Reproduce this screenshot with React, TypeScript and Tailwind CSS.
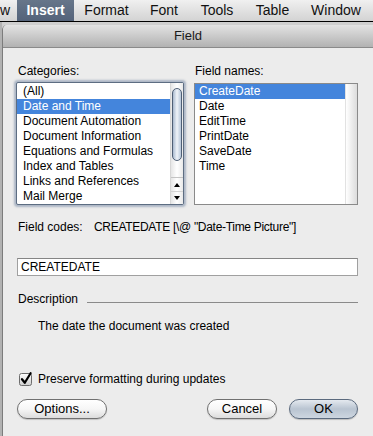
export default function App() {
  const cats = [
    "(All)",
    "Date and Time",
    "Document Automation",
    "Document Information",
    "Equations and Formulas",
    "Index and Tables",
    "Links and References",
    "Mail Merge",
  ];
  const names = ["CreateDate", "Date", "EditTime", "PrintDate", "SaveDate", "Time"];
  return (
    <div className="w-[373px] h-[436px] overflow-hidden bg-[#cfcfcf] font-['Liberation_Sans',Arial,sans-serif] text-black flex flex-col">
      {/* menu bar */}
      <div className="h-[22px] shrink-0 flex border-b border-black bg-linear-to-b from-[#f0f0f0] to-[#d3d3d3] text-[14px] leading-[21px] text-[#111]">
        <div className="w-[17px] shrink-0 pl-[-1px]">
          <span className="whitespace-nowrap">w</span>
        </div>
        <div className="w-[57px] shrink-0 text-center bg-linear-to-b from-[#67768a] to-[#54637a] text-white font-bold">Insert</div>
        <div className="w-[65px] shrink-0 text-center">Format</div>
        <div className="w-[50px] shrink-0 text-center">Font</div>
        <div className="w-[56px] shrink-0 text-center">Tools</div>
        <div className="w-[55px] shrink-0 text-center">Table</div>
        <div className="w-[72px] shrink-0 text-center">Window</div>
      </div>

      <div className="flex flex-1 min-h-0">
        <div className="w-[2px] shrink-0 bg-[#b2b2b2]" />
        <div className="flex-1 mt-[3px] flex flex-col border-l border-[#7c7c7c] rounded-tl-[5px] overflow-hidden">
          {/* title bar */}
          <div className="h-[23px] shrink-0 border-b border-[#8a8a8a] bg-linear-to-b from-[#e3e3e3] to-[#b2b2b2] text-center text-[13px] leading-[22px] text-[#1a1a1a]">
            Field
          </div>

          {/* body */}
          <div className="flex-1 bg-[#ececec] pl-[13px] pr-[15px] text-[12px] leading-[15px]">
            <div className="mt-[16px] flex gap-[10px]">
              {/* categories */}
              <div className="w-[168px] shrink-0">
                <div className="h-[15px] pl-[2px]">Categories:</div>
                <div className="mt-[3px] h-[123px] flex bg-white border border-[#5d6d82] rounded-[2px] shadow-[0_0_2px_2px_rgba(110,130,160,0.5)]">
                  <div className="flex-1 pt-px">
                    {cats.map((c, i) => (
                      <div
                        key={c}
                        className={
                          i === 1
                            ? "h-[15px] pl-[6px] whitespace-nowrap bg-[#4485dc] text-white"
                            : "h-[15px] pl-[6px] whitespace-nowrap"
                        }
                      >
                        {c}
                      </div>
                    ))}
                  </div>
                  <div className="w-[13px] shrink-0 flex flex-col border-l border-[#d6d6d6] bg-linear-to-r from-[#e6e6e6] via-white to-[#e9e9e9]">
                    <div className="flex-1 pt-[5px]">
                      <div className="ml-px w-[10px] h-[73px] rounded-full border border-[#4f5f75] bg-linear-to-r from-[#a9b9ce] via-[#f0f4f9] to-[#b6c6d9]" />
                    </div>
                    <div className="h-[14px] border-t border-[#c4c4c4] flex items-center justify-center">
                      <div className="w-0 h-0 border-x-[3px] border-x-transparent border-b-[4px] border-b-black" />
                    </div>
                    <div className="h-[13px] border-t border-[#d4d4d4] flex items-center justify-center">
                      <div className="w-0 h-0 border-x-[3px] border-x-transparent border-t-[4px] border-t-black" />
                    </div>
                  </div>
                </div>
              </div>

              {/* field names */}
              <div className="w-[164px] shrink-0">
                <div className="h-[15px] pl-[1px]">Field names:</div>
                <div className="mt-[4px] h-[122px] flex bg-white border border-[#8a8a8a]">
                  <div className="flex-1">
                    {names.map((n, i) => (
                      <div
                        key={n}
                        className={
                          i === 0
                            ? "h-[15px] pl-[4px] bg-[#4485dc] text-white"
                            : "h-[15px] pl-[4px]"
                        }
                      >
                        {n}
                      </div>
                    ))}
                  </div>
                  <div className="w-[12px] shrink-0 border-l border-[#e2e2e2] bg-linear-to-r from-white to-[#dcdcdc]" />
                </div>
              </div>
            </div>

            {/* field codes */}
            <div className="mt-[15px] h-[15px] flex pl-[2px] whitespace-nowrap">
              <div className="w-[76px] shrink-0">Field codes:</div>
              <div className="tracking-[-0.3px]">{'CREATEDATE [\\@ "Date-Time Picture"]'}</div>
            </div>

            {/* input */}
            <div className="mt-[23px] ml-px w-[341px] h-[18px] bg-white border border-[#a0a0a0] border-t-[#858585] pl-[3px] leading-[16px]">
              CREATEDATE
            </div>

            {/* description */}
            <div className="mt-[16px] h-[15px] flex items-start">
              <div className="pl-[2px] shrink-0">Description</div>
              <div className="flex-1 ml-[9px] mt-[10px] h-px bg-[#8a8a8a]" />
            </div>
            <div className="mt-[12px] pl-[22px] h-[15px]">The date the document was created</div>

            {/* checkbox */}
            <div className="mt-[38px] h-[15px] flex items-center pl-[3px]">
              <svg width="15" height="15" viewBox="0 0 15 15" className="shrink-0">
                <defs>
                  <linearGradient id="cbg" x1="0" y1="0" x2="0" y2="1">
                    <stop offset="0" stopColor="#ffffff" />
                    <stop offset="1" stopColor="#cfcfcf" />
                  </linearGradient>
                </defs>
                <rect x="0.5" y="1.5" width="12" height="12" rx="2" fill="url(#cbg)" stroke="#6d6d6d" />
                <path d="M3 7.2 L5.8 10.8 L11.6 1.2" fill="none" stroke="#000" strokeWidth="2.2" strokeLinecap="round" strokeLinejoin="round" />
              </svg>
              <span className="ml-[4px] whitespace-nowrap">Preserve formatting during updates</span>
            </div>

            {/* buttons */}
            <div className="mt-[12px] flex text-[13px] leading-[18px]">
              <div className="ml-px w-[90px] h-[20px] rounded-full border border-[#707070] bg-linear-to-b from-white via-[#f6f6f6] to-[#dcdcdc] shadow-[0_1px_1px_rgba(0,0,0,0.18)] text-center">
                Options...
              </div>
              <div className="ml-auto w-[70px] h-[20px] rounded-full border border-[#707070] bg-linear-to-b from-white via-[#f6f6f6] to-[#dcdcdc] shadow-[0_1px_1px_rgba(0,0,0,0.18)] text-center">
                Cancel
              </div>
              <div className="ml-[12px] w-[69px] h-[20px] rounded-full border border-[#5b6a7e] bg-linear-to-b from-[#e4e9ef] via-[#b9c4d1] to-[#cdd6e0] shadow-[0_1px_1px_rgba(0,0,0,0.2)] text-center">
                OK
              </div>
            </div>
          </div>
        </div>
      </div>
    </div>
  );
}
